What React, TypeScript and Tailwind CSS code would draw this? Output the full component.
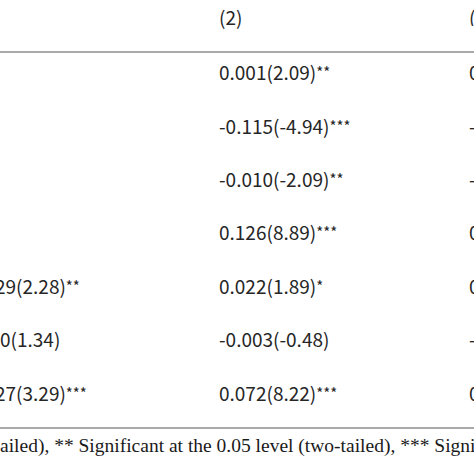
const rows: [string, string, string, string][] = [
  ["", "0.001(2.09)**", "0.001(2.11)**", ""],
  ["", "-0.115(-4.94)***", "-0.112(-4.81)***", ""],
  ["", "-0.010(-2.09)**", "-0.010(-2.05)**", ""],
  ["", "0.126(8.89)***", "0.125(8.80)***", ""],
  ["29(2.28)**", "0.022(1.89)*", "0.021(1.83)*", "-ml-[5px]"],
  ["0(1.34)", "-0.003(-0.48)", "-0.003(-0.45)", ""],
  ["27(3.29)***", "0.072(8.22)***", "0.070(8.05)***", "-ml-[5px]"],
];

function Cell({ text }: { text: string }) {
  const m = text.match(/^(.*?)(\**)$/);
  const body = m ? m[1] : text;
  const stars = m ? m[2] : "";
  return (
    <>
      {body}
      {stars && <span className="align-[2px] text-[15px]">{stars}</span>}
    </>
  );
}

export default function App() {
  return (
    <div
      className="h-[474px] w-[474px] overflow-hidden bg-white text-[#262626]"
      style={{ fontFamily: '"Noto Sans CJK KR", "Noto Sans", sans-serif' }}
    >
      <div className="grid h-[51px] grid-cols-[219px_250px_1fr] items-center pb-[18px] text-[19px] leading-none">
        <div />
        <div>(2)</div>
        <div className="overflow-hidden whitespace-nowrap">(3)</div>
      </div>
      <div className="h-[2px] bg-[#a9a9a9]" />
      {rows.map(([a, b, c, shift], i) => (
        <div
          key={i}
          className="grid h-[53.4px] grid-cols-[219px_250px_1fr] items-center pb-[16px] text-[19px] leading-none"
        >
          <div className={`whitespace-nowrap ${shift}`}>
            <Cell text={a} />
          </div>
          <div className="whitespace-nowrap">
            <Cell text={b} />
          </div>
          <div className="overflow-hidden whitespace-nowrap">
            <Cell text={c} />
          </div>
        </div>
      ))}
      <div className="h-[2px] bg-[#a9a9a9]" />
      <div
        className="overflow-hidden whitespace-nowrap pt-[2px] text-[19.5px] text-[#1a1a1a]"
        style={{ fontFamily: '"Liberation Serif", serif' }}
      >
        ailed), ** Significant at the 0.05 level (two-tailed), *** Significant at the 0.01 level (two-tailed).
      </div>
    </div>
  );
}
